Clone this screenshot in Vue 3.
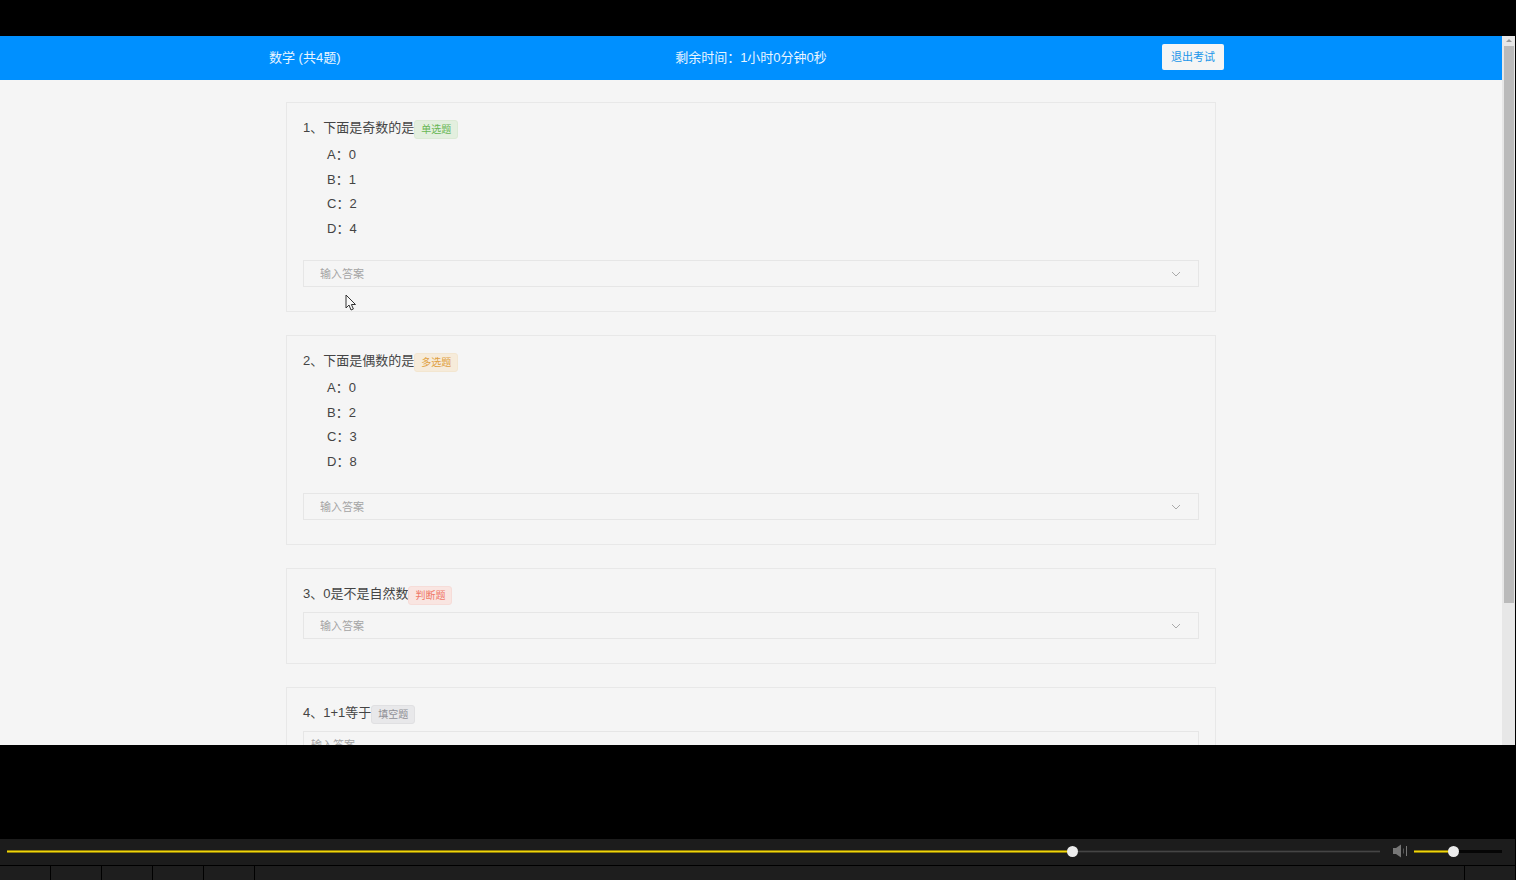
<script setup>
import { ref } from 'vue'

const questions = [
  { id: 1, title: '下面是奇数的是', tag: '单选题', kind: 'single', options: ['0', '1', '2', '4'], choices: ['A', 'B', 'C', 'D'] },
  { id: 2, title: '下面是偶数的是', tag: '多选题', kind: 'multi', options: ['0', '2', '3', '8'], choices: ['A', 'B', 'C', 'D'] },
  { id: 3, title: '0是不是自然数', tag: '判断题', kind: 'judge', options: [], choices: ['是', '否'] },
  { id: 4, title: '1+1等于', tag: '填空题', kind: 'blank', options: [], choices: [] }
]
const answers = ref({ 1: '', 2: '', 3: '', 4: '' })
const progress = ref(77.8)
const volume = ref(44.5)
</script>

<template>
  <div class="screen" lang="zh-CN">
    <main class="video">
      <div class="page">
        <header class="topbar">
          <div class="topbar-inner">
            <span>数学 (共4题)</span>
            <span>剩余时间：1小时0分钟0秒</span>
            <button type="button" class="exit">退出考试</button>
          </div>
        </header>
        <div class="questions">
          <section v-for="q in questions" :key="q.id" class="card">
            <div class="title">
              <label :for="'answer-' + q.id">{{ q.id }}、{{ q.title }}</label>
              <span class="tag" :class="q.kind">{{ q.tag }}</span>
            </div>
            <ul v-if="q.options.length" class="options">
              <li v-for="(o, i) in q.options" :key="i">{{ 'ABCD'[i] }}：{{ o }}</li>
            </ul>
            <div v-if="q.choices.length" class="field">
              <select :id="'answer-' + q.id" v-model="answers[q.id]" class="box select" :class="{ empty: !answers[q.id] }">
                <option value="">输入答案</option>
                <option v-for="c in q.choices" :key="c" :value="c">{{ c }}</option>
              </select>
              <svg class="chevron" viewBox="0 0 10 6" aria-hidden="true"><path d="M1 1l4 4 4-4" /></svg>
            </div>
            <div v-else class="field">
              <input :id="'answer-' + q.id" v-model="answers[q.id]" class="box" type="text" placeholder="输入答案">
            </div>
          </section>
        </div>
        <svg class="cursor" viewBox="0 0 12 18" aria-hidden="true">
          <path d="M1 1v13l3-3 2 5 2.400-1-2-4.500h4.100z" />
        </svg>
      </div>
      <div class="scrollbar" aria-hidden="true">
        <svg class="arrow" viewBox="0 0 10 10"><path d="M2 6l3-3 3 3z" /></svg>
        <div class="rail"><div class="handle"></div></div>
      </div>
    </main>
    <footer class="player">
      <div class="controls">
        <input v-model="progress" class="range seek" type="range" min="0" max="100" step="any" aria-label="播放进度" :style="{ '--fill': progress + '%' }">
        <svg class="speaker" viewBox="0 0 16 14" aria-hidden="true">
          <path d="M1 4h3l5-3.500v13L4 10H1z" fill="#777" />
          <path d="M11.500 4.500v5" stroke="#555" />
          <path d="M14.500 2v10" stroke="#777" />
        </svg>
        <input v-model="volume" class="range volume" type="range" min="0" max="100" step="any" aria-label="音量" :style="{ '--fill': volume + '%' }">
      </div>
      <div class="cells">
        <i v-for="n in 5" :key="n" class="cell"></i>
        <i class="cell wide"></i>
        <i class="cell"></i>
      </div>
    </footer>
  </div>
</template>

<style>
body { background: #000; }
</style>

<style scoped>
* { box-sizing: border-box; }
.screen {
  height: 100vh;
  display: flex;
  flex-direction: column;
  padding: 36px 1px 0 0;
  background: #000;
  color: #444;
  font: 13px/20px "Liberation Sans", "Noto Sans CJK SC", sans-serif;
}
.video {
  flex: 1;
  min-height: 0;
  display: flex;
  margin-bottom: 94px;
  overflow: hidden;
}
.page {
  position: relative;
  flex: 1;
  overflow: hidden;
  background: #f5f5f5;
}
.topbar {
  height: 44px;
  background: #0090ff;
  color: #e9f5ff;
}
.topbar-inner {
  display: grid;
  grid-template-columns: 1fr auto 1fr;
  align-items: center;
  max-width: 964px;
  height: 44px;
  margin: 0 auto;
}
.exit {
  justify-self: end;
  width: 62px;
  height: 26px;
  margin: 0 9px 3px 0;
  padding: 0;
  border: 0;
  border-radius: 2px;
  background: #f5f5f5;
  color: #2095ea;
  font: inherit;
  font-size: 11px;
}
.questions {
  display: flex;
  flex-direction: column;
  gap: 23px;
  max-width: 930px;
  margin: 22px auto;
}
.card {
  padding: 13px 16px 24px;
  border: 1px solid #e8e8e8;
}
.title {
  display: flex;
  align-items: center;
  height: 24px;
}
.tag {
  height: 19px;
  margin-top: 2px;
  padding: 0 6px;
  border: 1px solid;
  border-radius: 3px;
  font-size: 10px;
  line-height: 17px;
}
.single { color: #67b755; background: #e3efdf; border-color: #dbead5; }
.multi { color: #e0a040; background: #f6ebda; border-color: #f3e6d0; }
.judge { color: #f07868; background: #f9e5e1; border-color: #f6dcd8; }
.blank { color: #909096; background: #e8e8ea; border-color: #e0e0e2; }
.options {
  display: grid;
  min-height: 98px;
  margin: 3px 0 19px;
  padding: 0 0 0 24px;
  list-style: none;
  align-items: center;
}
.field {
  position: relative;
  margin-top: 6px;
}
.box {
  display: block;
  width: 100%;
  height: 27px;
  padding: 0 7px;
  border: 1px solid #e6e6e6;
  border-radius: 0;
  outline: 0;
  background: transparent;
  color: #444;
  font: inherit;
  font-size: 11px;
}
.box::placeholder { color: #a4a4a4; }
.select {
  appearance: none;
  padding: 0 32px 0 16px;
}
.select.empty { color: #a4a4a4; }
.chevron {
  position: absolute;
  right: 18px;
  top: 11px;
  width: 10px;
  height: 6px;
  fill: none;
  stroke: #aaa;
  pointer-events: none;
}
.cursor {
  position: absolute;
  left: 345px;
  top: 258px;
  width: 12px;
  height: 18px;
  fill: #fafafa;
  stroke: #333;
  pointer-events: none;
}
.scrollbar {
  display: flex;
  flex-direction: column;
  width: 13px;
  padding: 0 1px 0 2px;
  background: #e7e7e7;
}
.arrow {
  width: 10px;
  height: 10px;
  fill: #999;
}
.rail { flex: 1; }
.handle {
  height: 79.7%;
  background: #bababa;
}
.controls {
  display: flex;
  align-items: center;
  height: 26px;
  padding: 0 13px 2px 7px;
  background: #1c1c1c;
}
.range {
  appearance: none;
  height: 12px;
  margin: 0;
  background: transparent;
}
.range::-webkit-slider-runnable-track {
  height: 3px;
  background:
    linear-gradient(#8f7d08 0 1px, #f0d60a 1px 2px, #8f7d08 2px) left / var(--fill) 100% no-repeat,
    var(--rest);
}
.range::-webkit-slider-thumb {
  appearance: none;
  width: 11px;
  height: 11px;
  margin-top: -4px;
  border-radius: 50%;
  background: #ececec;
}
.seek {
  --rest: linear-gradient(#292929 0 1px, #454545 1px 2px, #292929 2px);
  flex: 1;
}
.volume {
  --rest: linear-gradient(#050505, #050505);
  width: 88px;
}
.speaker {
  width: 16px;
  height: 14px;
  margin: 0 6px 0 12px;
  fill: none;
}
.cells {
  display: flex;
  gap: 1px;
  height: 14px;
  margin-top: 1px;
}
.cell {
  width: 50px;
  background: #1e1e1e;
}
.cell.wide { flex: 1; }
</style>
